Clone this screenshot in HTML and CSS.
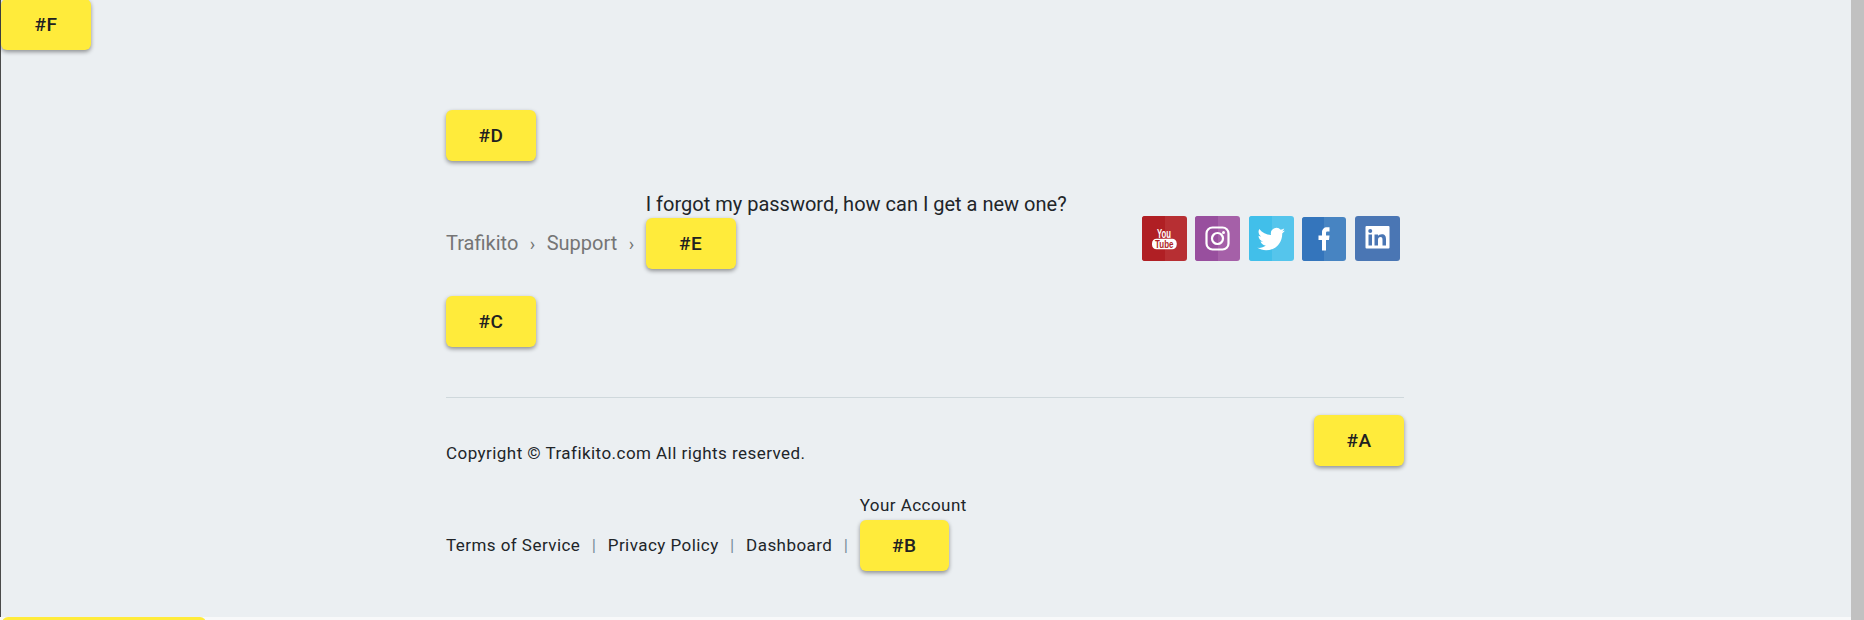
FILE: index.html
```html
<!DOCTYPE html>
<html lang="en">
<head>
<meta charset="utf-8">
<title>Trafikito Support</title>
<link rel="stylesheet" href="styles.css">
</head>
<body>
<div class="page">
  <div class="content">
    <main class="main">
      <div class="top-slot"><a class="btn">#F</a></div>
      <div class="container">
        <div class="slot-d"><a class="btn">#D</a></div>
        <div class="crumb-row">
          <nav class="crumbs">
            <a class="crumb">Trafikito</a>
            <span class="crumb-sep">›</span>
            <a class="crumb">Support</a>
            <span class="crumb-sep">›</span>
            <div class="crumb-current">
              <div class="question">I forgot my password, how can I get a new one?</div>
              <a class="btn">#E</a>
            </div>
          </nav>
          <div class="social">
            <svg class="icon" viewBox="0 0 45 45"><rect width="45" height="45" rx="3" fill="#b72f33"/><path d="M3 0h20v45H3a3 3 0 0 1-3-3V3a3 3 0 0 1 3-3z" fill="#b01f24"/><text class="yt-you" x="15" y="21.500" textLength="14" lengthAdjust="spacingAndGlyphs">You</text><rect x="10" y="22.700" width="24.700" height="10.500" rx="4.500" fill="#fff"/><text class="yt-tube" x="13" y="32" textLength="18.500" lengthAdjust="spacingAndGlyphs">Tube</text></svg>
            <svg class="icon" viewBox="0 0 45 45"><rect width="45" height="45" rx="3" fill="#a560a8"/><path d="M3 0h20v45H3a3 3 0 0 1-3-3V3a3 3 0 0 1 3-3z" fill="#984f9e"/><rect x="11.500" y="11.500" width="22" height="22" rx="6" fill="none" stroke="#fff" stroke-width="2.200"/><circle cx="22.500" cy="22.500" r="5.500" fill="none" stroke="#fff" stroke-width="2.200"/><circle cx="28.500" cy="16.500" r="1.500" fill="#fff"/></svg>
            <svg class="icon" viewBox="0 0 45 45"><rect width="45" height="45" rx="3" fill="#55c5ec"/><path d="M3 0h20v45H3a3 3 0 0 1-3-3V3a3 3 0 0 1 3-3z" fill="#41bfea"/><path d="M36 14.500c-1 .5-2.100.8-3.200.9 1.200-.7 2-1.800 2.400-3-1 .6-2.300 1.100-3.500 1.300a5.700 5.700 0 0 0-9.700 5.200c-4.700-.2-8.900-2.500-11.700-6-1.500 2.600-.7 5.900 1.800 7.600-.9 0-1.800-.3-2.600-.7 0 2.700 2 5.100 4.600 5.600-.8.200-1.700.3-2.600.1.700 2.300 2.900 3.900 5.300 4-2.300 1.800-5.300 2.700-8.400 2.300 2.500 1.600 5.500 2.500 8.700 2.500 10.500 0 16.500-8.900 16.100-16.900 1.100-.8 2-1.800 2.800-2.900z" fill="#fff"/></svg>
            <svg class="icon" viewBox="0 0 45 45"><rect y="1" width="44" height="44" rx="3" fill="#4784c2"/><path d="M3 1h19v44H3a3 3 0 0 1-3-3V4a3 3 0 0 1 3-3z" fill="#3475bc"/><path d="M20 34.500V24h-3.500v-4.500H20v-3c0-3.200 2-5.200 5-5.200h2.500v4.200h-2c-1.200 0-1.500.6-1.500 1.600v2.400h3.500l-.5 4.500h-3v10.500z" fill="#fff"/></svg>
            <svg class="icon" viewBox="0 0 45 45"><rect width="45" height="45" rx="3" fill="#4a76b4"/><rect x="10.500" y="10" width="24" height="22.500" rx="1" fill="#fff"/><rect x="13.500" y="18.500" width="3.500" height="11" fill="#4a76b4"/><circle cx="15.250" cy="15" r="2" fill="#4a76b4"/><path d="M19.500 18.500H23v1.500c.6-1 1.900-1.800 3.800-1.800 3.200 0 4.200 2 4.200 5v6.300h-3.500v-5.600c0-1.600-.4-2.800-2-2.800s-2.500 1.100-2.500 2.900v5.500h-3.500z" fill="#4a76b4"/></svg>
          </div>
        </div>
        <div class="slot-c"><a class="btn">#C</a></div>
        <footer class="footer">
          <div class="copy-row">
            <div class="copy">Copyright © Trafikito.com All rights reserved.</div>
            <a class="btn">#A</a>
          </div>
          <div class="links">
            <a class="link">Terms of Service</a>
            <span class="pipe">|</span>
            <a class="link">Privacy Policy</a>
            <span class="pipe">|</span>
            <a class="link">Dashboard</a>
            <span class="pipe">|</span>
            <div class="account">
              <div class="account-label">Your Account</div>
              <a class="btn btn-narrow">#B</a>
            </div>
          </div>
        </footer>
      </div>
    </main>
    <div class="strip"><div class="bottom-bar"></div></div>
  </div>
  <div class="scrollbar"></div>
</div>
</body>
</html>
```
FILE: styles.css
```css
* { box-sizing: border-box; }
html, body { margin: 0; padding: 0; height: 100%; overflow: hidden; }
body { font-family: Roboto, "Liberation Sans", sans-serif; color: #212529; background: #f8f9fa; }
.page { display: flex; height: 620px; }
.content { flex: 1; display: flex; flex-direction: column; min-width: 0; }
.main { height: 617px; flex: none; background: #ebeff2; border-left: 1px solid #4a4a4a; }
.strip { flex: 1; overflow: hidden; padding-left: 2px; }
.bottom-bar { width: 204px; height: 20px; background: #ffeb3b; border-radius: 6px 6px 0 0; }
.scrollbar { width: 13px; background: #c1c1c1; }
.btn { display: flex; align-items: center; justify-content: center; width: 90px; height: 51px; background: #ffeb3b; border-radius: 6px; box-shadow: 0 2px 4px rgba(0,0,0,.4); color: #212121; font-size: 19px; font-weight: 500; letter-spacing: .5px; }
.btn-narrow { width: 89px; }
.top-slot { height: 111px; }
.top-slot .btn { margin-top: -1px; }
.container { width: 958px; margin-left: 445px; }
.slot-d { height: 80px; }
.crumb-row { display: flex; justify-content: space-between; align-items: flex-end; }
.crumbs { display: flex; align-items: flex-end; gap: 11.5px; color: #757575; font-size: 20px; line-height: 51px; }
.crumb-sep { font-size: 18px; }
.crumb-current { display: flex; flex-direction: column; }
.question { color: #212529; font-size: 20px; white-space: nowrap; line-height: 28px; }
.social { display: flex; gap: 8.25px; margin-right: 4px; margin-bottom: 8px; }
.icon { width: 45px; height: 45px; display: block; }
.yt-you { font-family: "Liberation Sans", sans-serif; font-size: 12.500px; font-weight: 700; fill: #fff; }
.yt-tube { font-family: "Liberation Sans", sans-serif; font-size: 10.500px; font-weight: 700; fill: #b01f24; }
.slot-c { padding-top: 27px; height: 129px; border-bottom: 1px solid #cfd8dc; }
.copy-row { display: flex; justify-content: space-between; align-items: flex-start; padding-top: 17px; height: 97px; }
.copy { font-size: 17px; letter-spacing: .45px; line-height: 20px; padding-top: 28px; color: #212529; }
.links { display: flex; align-items: flex-end; gap: 11.400px; font-size: 17px; letter-spacing: .45px; line-height: 51px; color: #212529; }
.pipe { color: #78909c; }
.account { display: flex; flex-direction: column; gap: 5px; }
.account-label { line-height: 20px; white-space: nowrap; }
```
